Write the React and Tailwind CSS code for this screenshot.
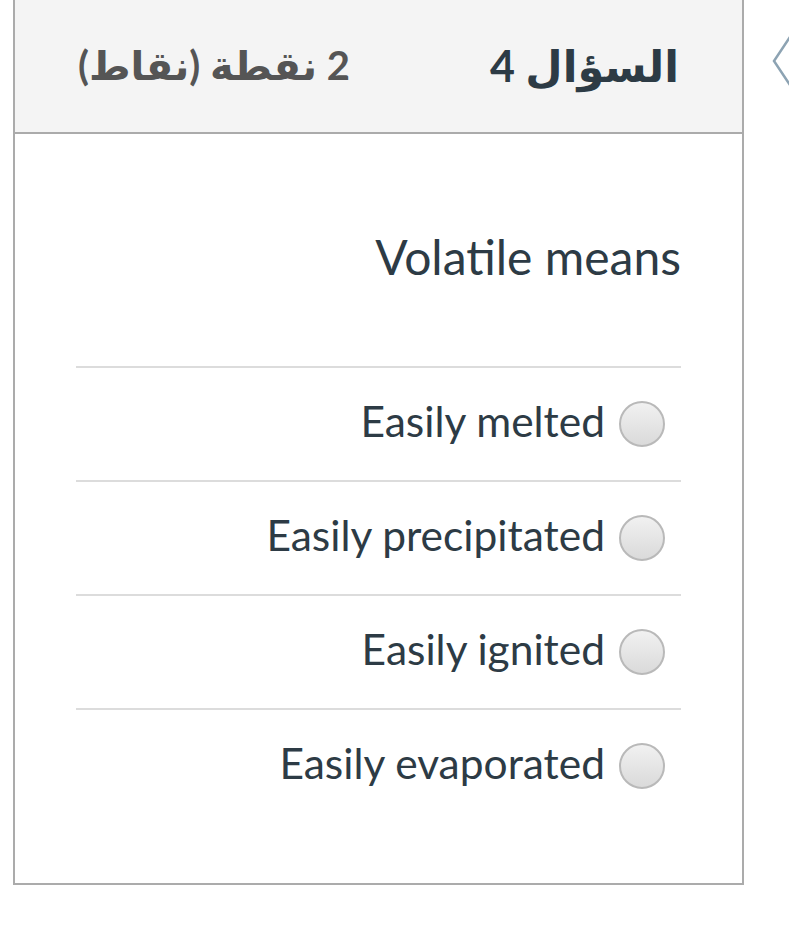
const options = ['Easily melted', 'Easily precipitated', 'Easily ignited', 'Easily evaporated'];

function Radio() {
  return (
    <span className="inline-block h-[46px] w-[46px] shrink-0 rounded-full border-2 border-[#b9b9b9] bg-gradient-to-b from-[#f1f1f1] to-[#dadada]" />
  );
}

export default function App() {
  return (
    <div className="flex min-h-[931px] items-start bg-white font-['Lato','DejaVu_Sans',sans-serif] text-[#2d3b45]">
      <div className="ml-[13px] w-[731px] shrink-0 border-x-2 border-b-2 border-[#ababab]">
        <div
          dir="rtl"
          className="flex h-[134px] items-center justify-between border-b-2 border-[#ababab] bg-[#f4f4f4] px-[63px] pb-[2px]"
        >
          <span className="text-[43px] font-bold leading-none">السؤال 4</span>
          <span className="text-[40px] font-bold leading-none text-[#555]">2 نقطة (نقاط)</span>
        </div>
        <div className="px-[61px] pb-[61px] pt-[94px]">
          <p className="text-right text-[48px] leading-[58px]">Volatile means</p>
          <ul className="mt-[80px]">
            {options.map((opt) => (
              <li
                key={opt}
                className="flex h-[114px] items-center justify-end gap-[14px] border-t-2 border-[#dcdcdc] pr-[16px]"
              >
                <span className="pb-[6px] text-[42.5px] leading-none">{opt}</span>
                <Radio />
              </li>
            ))}
          </ul>
        </div>
      </div>
      <div className="flex h-[122px] flex-1 items-center justify-end">
        <svg width="22" height="54" viewBox="0 0 22 54" className="mr-[-3px]">
          <path d="M20 3 L4 27 L20 51" fill="none" stroke="#8da3b3" strokeWidth="2.5" />
        </svg>
      </div>
    </div>
  );
}
